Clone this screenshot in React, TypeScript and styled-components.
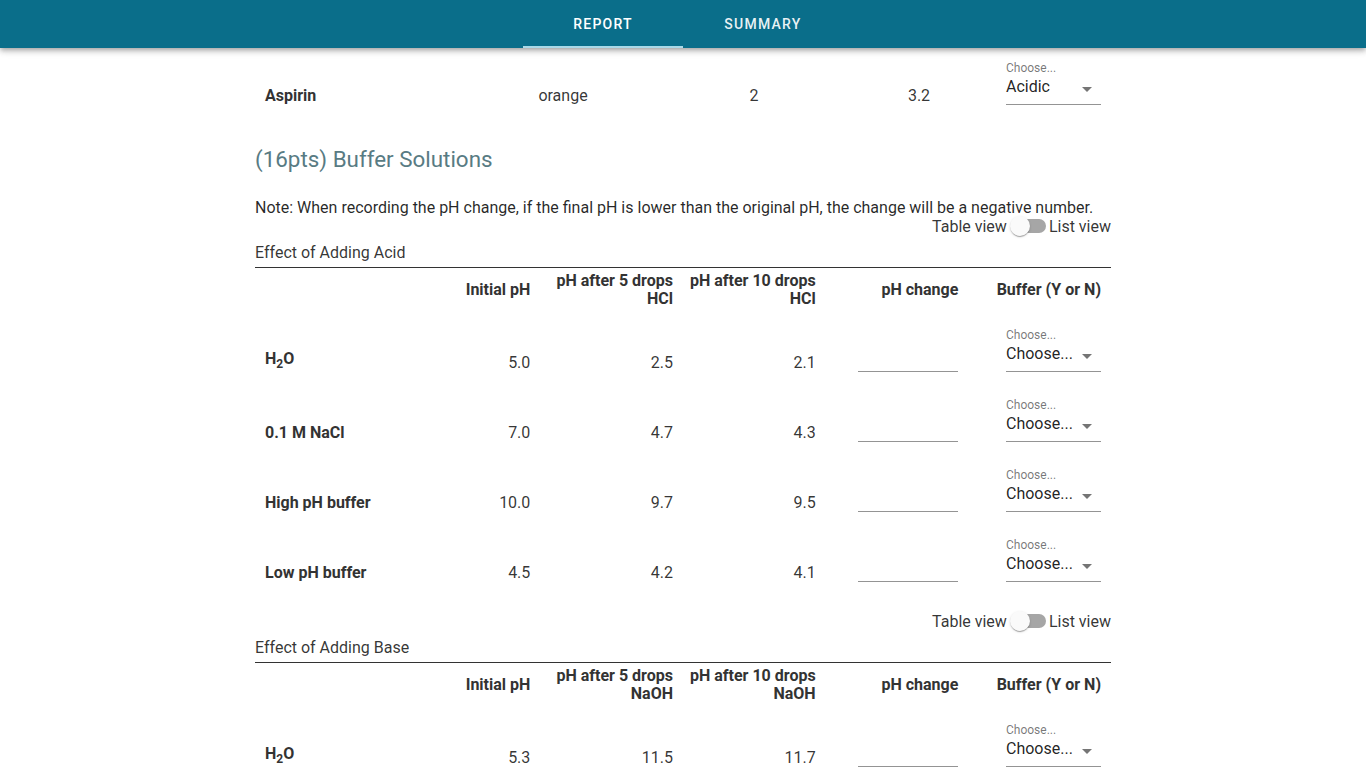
import React from "react";
import styled, { createGlobalStyle } from "styled-components";

const Global = createGlobalStyle`
  html, body { margin: 0; padding: 0; overflow: hidden; background: #fff; }
  body { font-family: Roboto, "Noto Sans", "Liberation Sans", sans-serif; color: rgba(0,0,0,0.87); }
  * { box-sizing: border-box; }
`;

const AppBar = styled.header`
  position: relative;
  z-index: 2;
  height: 48px;
  background: #0a6e8a;
  box-shadow: 0 2px 4px -1px rgba(0,0,0,0.2), 0 4px 5px 0 rgba(0,0,0,0.14), 0 1px 10px 0 rgba(0,0,0,0.12);
  display: flex;
  justify-content: center;
`;

const Tab = styled.div<{ $active?: boolean }>`
  width: 160px;
  height: 48px;
  display: flex;
  align-items: center;
  justify-content: center;
  font-size: 14px;
  font-weight: 500;
  letter-spacing: 1.25px;
  color: ${(p) => (p.$active ? "#ffffff" : "rgba(255,255,255,0.92)")};
  border-bottom: 2px solid ${(p) => (p.$active ? "#a9d9e8" : "transparent")};
  padding-top: 2px;
`;

const Main = styled.main`
  width: 856px;
  margin: 0 auto;
  padding-top: 12px;
`;

const PrevRow = styled.div`
  display: grid;
  grid-template-columns: 221px 174px 208px 122px 1fr;
  height: 70px;
  font-size: 16px;
`;

const Cell = styled.div<{ $align?: "left" | "center" | "right" }>`
  display: flex;
  align-items: center;
  justify-content: ${(p) => (p.$align === "center" ? "center" : p.$align === "right" ? "flex-end" : "flex-start")};
  padding: 0 10px;
  line-height: 19px;
  color: rgba(0,0,0,0.8);
`;

const LabelCell = styled(Cell)`
  font-weight: 700;
  color: #333;
`;

const Sub = styled.sub`
  font-size: 12px;
`;

const TopCell = styled.div`
  display: flex;
  justify-content: flex-end;
  align-items: flex-start;
  padding: 0 10px;
`;

const Heading = styled.h2`
  margin: 13px 0 0;
  font-size: 22.4px;
  font-weight: 400;
  line-height: 32px;
  color: #587b83;
`;

const Note = styled.p`
  margin: 24px 0 0;
  font-size: 16px;
  line-height: 17px;
  color: rgba(0,0,0,0.85);
`;

const ToggleRow = styled.div<{ $mt: number }>`
  margin-top: ${(p) => p.$mt}px;
  height: 20px;
  display: flex;
  justify-content: flex-end;
  align-items: center;
  gap: 3px;
  font-size: 16px;
  color: rgba(0,0,0,0.8);
`;

const SwitchBox = styled.span`
  position: relative;
  width: 36px;
  height: 20px;
  display: inline-block;
  &::before {
    content: "";
    position: absolute;
    left: 3px;
    right: 0;
    top: 3px;
    height: 14px;
    border-radius: 7px;
    background: #a6a6a6;
  }
  &::after {
    content: "";
    position: absolute;
    left: 0;
    top: 0;
    width: 20px;
    height: 20px;
    border-radius: 50%;
    background: #fafafa;
    box-shadow: 0 2px 1px -1px rgba(0,0,0,0.2), 0 1px 1px 0 rgba(0,0,0,0.14), 0 1px 3px 0 rgba(0,0,0,0.12);
  }
`;

const SubTitle = styled.div`
  margin-top: 7px;
  font-size: 16px;
  line-height: 19px;
  padding-bottom: 5px;
  border-bottom: 1px solid #333;
  color: rgba(0,0,0,0.8);
`;

const Grid = styled.div`
  display: grid;
  grid-template-columns: repeat(6, 1fr);
`;

const HeadRow = styled(Grid)`
  height: 42px;
  padding-top: 2px;
  margin-bottom: 17px;
`;

const HeadCell = styled.div`
  display: flex;
  align-items: center;
  justify-content: flex-end;
  text-align: right;
  padding: 0 10px 0 2px;
  font-size: 16px;
  font-weight: 700;
  line-height: 18px;
  color: #333;
  white-space: nowrap;
`;

const BodyRow = styled(Grid)`
  height: 70px;
  font-size: 16px;
`;

const SelectBox = styled.div`
  width: 95px;
  height: 45px;
  padding-top: 1px;
  border-bottom: 1px solid rgba(0,0,0,0.42);
  position: relative;
`;

const SelectLabel = styled.div`
  font-size: 12px;
  line-height: 14px;
  color: rgba(0,0,0,0.54);
`;

const SelectValue = styled.div`
  margin-top: 2px;
  font-size: 16px;
  line-height: 20px;
  color: rgba(0,0,0,0.87);
`;

const Arrow = styled.svg`
  position: absolute;
  right: 9px;
  top: 27px;
`;

const InputLine = styled.div`
  width: 100px;
  height: 45px;
  border-bottom: 1px solid rgba(0,0,0,0.42);
`;

const Select = ({ value }: { value: string }) => (
  <SelectBox>
    <SelectLabel>Choose...</SelectLabel>
    <SelectValue>{value}</SelectValue>
    <Arrow width="10" height="5" viewBox="7 10 10 5">
      <path d="M7 10l5 5 5-5z" fill="rgba(0,0,0,0.54)" />
    </Arrow>
  </SelectBox>
);

type Row = { name: React.ReactNode; v: [string, string, string] };

const H2O = (
  <span>
    H<Sub>2</Sub>O
  </span>
);

const acidRows: Row[] = [
  { name: H2O, v: ["5.0", "2.5", "2.1"] },
  { name: "0.1 M NaCl", v: ["7.0", "4.7", "4.3"] },
  { name: "High pH buffer", v: ["10.0", "9.7", "9.5"] },
  { name: "Low pH buffer", v: ["4.5", "4.2", "4.1"] },
];

const baseRows: Row[] = [
  { name: H2O, v: ["5.3", "11.5", "11.7"] },
  { name: "0.1 M NaCl", v: ["7.0", "11.8", "12.0"] },
  { name: "High pH buffer", v: ["10.0", "10.2", "10.4"] },
  { name: "Low pH buffer", v: ["4.5", "4.9", "5.2"] },
];

const Toggle = ({ mt }: { mt: number }) => (
  <ToggleRow $mt={mt}>
    <span>Table view</span>
    <SwitchBox />
    <span>List view</span>
  </ToggleRow>
);

const DataTable = ({ title, reagent, rows }: { title: string; reagent: string; rows: Row[] }) => (
  <section>
    <SubTitle>{title}</SubTitle>
    <HeadRow>
      <HeadCell />
      <HeadCell>Initial pH</HeadCell>
      <HeadCell>
        pH after 5 drops
        <br />
        {reagent}
      </HeadCell>
      <HeadCell>
        pH after 10 drops
        <br />
        {reagent}
      </HeadCell>
      <HeadCell>pH change</HeadCell>
      <HeadCell>Buffer (Y or N)</HeadCell>
    </HeadRow>
    {rows.map((r, i) => (
      <BodyRow key={i}>
        <LabelCell>{r.name}</LabelCell>
        <Cell $align="right">{r.v[0]}</Cell>
        <Cell $align="right">{r.v[1]}</Cell>
        <Cell $align="right">{r.v[2]}</Cell>
        <TopCell>
          <InputLine />
        </TopCell>
        <TopCell>
          <Select value="Choose..." />
        </TopCell>
      </BodyRow>
    ))}
  </section>
);

export default function App() {
  return (
    <>
      <Global />
      <AppBar>
        <Tab $active>REPORT</Tab>
        <Tab>SUMMARY</Tab>
      </AppBar>
      <Main>
        <PrevRow>
          <LabelCell>Aspirin</LabelCell>
          <Cell $align="center">orange</Cell>
          <Cell $align="center">2</Cell>
          <Cell $align="center">3.2</Cell>
          <TopCell>
            <Select value="Acidic" />
          </TopCell>
        </PrevRow>
        <Heading>(16pts) Buffer Solutions</Heading>
        <Note>
          Note: When recording the pH change, if the final pH is lower than the original pH, the change will be a negative number.
        </Note>
        <Toggle mt={0} />
        <DataTable title="Effect of Adding Acid" reagent="HCl" rows={acidRows} />
        <Toggle mt={4} />
        <DataTable title="Effect of Adding Base" reagent="NaOH" rows={baseRows} />
      </Main>
    </>
  );
}
